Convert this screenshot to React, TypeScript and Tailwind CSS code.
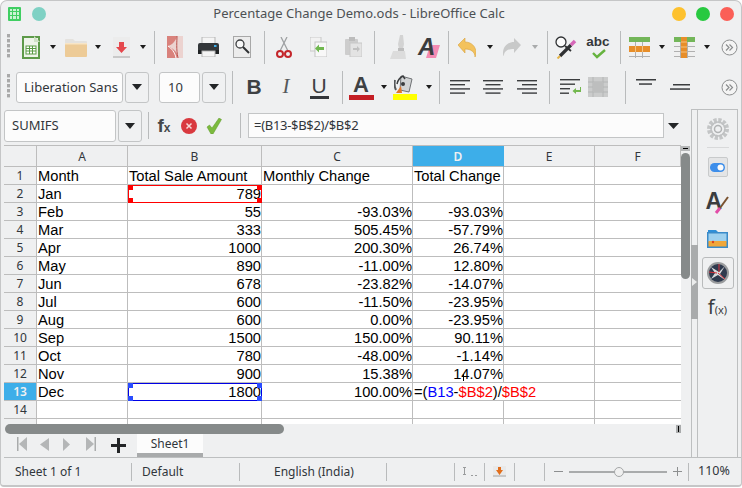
import React from "react";

const Sep = ({ c = "h-[33px]" }: { c?: string }) => (
  <div className="w-[4px] flex justify-center shrink-0"><div className={`w-px bg-[#b9bbbc] ${c}`} /></div>
);
const Slot = ({ c, children }: { c: string; children?: React.ReactNode }) => (
  <div className={`flex items-center justify-center shrink-0 ${c}`}>{children}</div>
);
const Caret = ({ color = "#1c1c1c" }: { color?: string }) => (
  <svg width="6" height="4" viewBox="0 0 6 4" className="shrink-0"><path d="M0 0h6L3 4z" fill={color} /></svg>
);
const Handle = () => (
  <svg width="4" height="26" viewBox="0 0 4 26">
    {[0, 5, 10, 15, 20].map((y) => <rect key={y} x="0" y={y} width="3" height="3.4" fill="#a9a9a9" />)}
  </svg>
);
const More = () => (
  <svg width="17" height="17" viewBox="0 0 17 17" fill="none" stroke="#8b8d8e" className="shrink-0">
    <circle cx="8.500" cy="8.500" r="7.500" fill="#f4f4f4" />
    <path d="M5 5.500l3 3-3 3M8.500 5.500l3 3-3 3" strokeWidth="1.200" />
  </svg>
);
const Lines = ({ align }: { align: "l" | "c" | "r" }) => {
  const short = align === "l" ? 0 : align === "c" ? 2.5 : 5;
  return (
    <svg width="20" height="14" viewBox="0 0 20 14" className="shrink-0">
      <rect x="0" y="0" width="20" height="1.400" fill="#3b3d3f" />
      <rect x={short} y="4" width="15" height="1.400" fill="#3b3d3f" />
      <rect x="0" y="8.200" width="20" height="1.400" fill="#3b3d3f" />
      <rect x={short} y="12.400" width="15" height="1.400" fill="#3b3d3f" />
    </svg>
  );
};
const GridIcon = ({ cols }: { cols?: boolean }) => (
  <svg width="21" height="21" viewBox="0 0 21 21" className="shrink-0">
    <rect x="0" y="0" width="21" height="21" rx="1" fill="#f0f0f0" />
    <rect x="0" y="0" width="21" height="5" fill="#73b659" />
    {[9, 14, 19].map((y) => <rect key={`a${y}`} x="0" y={y} width="21" height="1" fill="#b0b0b0" />)}
    {[6, 13].map((x) => <rect key={`b${x}`} x={x} y="5" width="1" height="16" fill="#b0b0b0" />)}
    {cols ? (
      <>
        <rect x="7" y="0" width="6" height="21" fill="#e78e2a" />
        <path d="M7 5h6M7 10h6M7 15h6" stroke="#f6c27f" />
      </>
    ) : (
      <>
        <rect x="0" y="9" width="21" height="6" fill="#e78e2a" />
        <path d="M6.500 9v6M13.500 9v6" stroke="#f6c27f" />
      </>
    )}
  </svg>
);

const Toolbar1 = () => (
  <div className="h-[42px] flex items-center pl-[6px] shrink-0">
    <div className="w-[13px] shrink-0"><Handle /></div>
    <Slot c="w-[22px]">
      <svg width="18" height="23" viewBox="0 0 18 23">
        <rect width="18" height="23" fill="#5d9a49" /><rect x="2" y="2" width="14" height="19" fill="#eef4ea" />
        <path d="M12 0l6 6h-6z" fill="#cfe1c6" />
        <rect x="4" y="10" width="10" height="8" fill="#fff" stroke="#5a9b45" />
        <path d="M4 12.500h10M4 15h10M7.500 10v8M10.500 10v8" stroke="#5a9b45" />
      </svg>
    </Slot>
    <Slot c="w-[22px]"><Caret /></Slot>
    <Slot c="w-[24px]">
      <svg width="22" height="19" viewBox="0 0 22 19">
        <path d="M0 2a1 1 0 011-1h7l2 2h11a1 1 0 011 1v2H0z" fill="#e4e2de" />
        <rect x="0" y="5" width="22" height="14" rx="1" fill="#edcb97" /><rect y="5" width="22" height="1.500" fill="#f8e5c6" />
      </svg>
    </Slot>
    <Slot c="w-[20px]"><Caret /></Slot>
    <Slot c="w-[26px]">
      <svg width="17" height="21" viewBox="0 0 17 21">
        <rect width="17" height="21" fill="#ececec" /><rect y="19" width="17" height="2" fill="#c9c9c9" />
        <path d="M6 5h5v5h3l-5.500 6L3 10h3z" fill="#e5484d" />
      </svg>
    </Slot>
    <Slot c="w-[18px]"><Caret /></Slot>
    <Sep />
    <Slot c="w-[38px]">
      <svg width="16" height="22" viewBox="0 0 16 22">
        <rect width="16" height="22" fill="#d9827c" /><path d="M10 0h6v22h-6C12 15 4 12 1 10c4-1 8-5 9-10z" fill="#ecd3d0" />
        <path d="M1 10c3 2 7 6 8 12" stroke="#fff" fill="none" /><path d="M10 0c0 5-1 13 1 22" stroke="#b9514c" fill="none" />
      </svg>
    </Slot>
    <Slot c="w-[28px]">
      <svg width="21" height="20" viewBox="0 0 21 20">
        <rect x="4" y="0" width="13" height="7" fill="#f4f4f4" stroke="#b5b5b5" />
        <rect x="0" y="6" width="21" height="10" rx="2" fill="#33373a" />
        <rect x="16" y="8" width="2.500" height="2" fill="#3daee9" />
        <rect x="0" y="13" width="21" height="4" fill="#1f2224" />
        <rect x="4" y="14" width="13" height="6" fill="#f4f4f4" stroke="#b5b5b5" />
      </svg>
    </Slot>
    <Slot c="w-[40px]">
      <svg width="18" height="22" viewBox="0 0 18 22">
        <rect x="0.500" y="0.500" width="17" height="21" fill="#ececec" stroke="#a8a8a8" />
        <circle cx="7" cy="8" r="4" fill="#f8f8f8" stroke="#3d3f41" strokeWidth="1.300" />
        <path d="M10 11l6 6" stroke="#2f3133" strokeWidth="2" />
      </svg>
    </Slot>
    <Sep />
    <Slot c="w-[36px]">
      <svg width="16" height="21" viewBox="0 0 16 21" fill="none">
        <path d="M4 14L11 0M12 14L5 0" stroke="#9ea1a3" strokeWidth="1.300" />
        <circle cx="4" cy="17" r="3" stroke="#c4262b" strokeWidth="2" /><circle cx="12" cy="17" r="3" stroke="#c4262b" strokeWidth="2" />
      </svg>
    </Slot>
    <Slot c="w-[32px]">
      <svg width="17" height="20" viewBox="0 0 17 20">
        <rect x="0" y="0" width="11" height="14" fill="#f2f2f2" stroke="#c8c8c8" /><rect x="5" y="5" width="12" height="15" fill="#f8f8f8" stroke="#c4c4c4" />
        <path d="M14 10H9V7.500L5 11.500l4 4V13h5z" fill="#70b84f" />
      </svg>
    </Slot>
    <Slot c="w-[38px]">
      <svg width="17" height="20" viewBox="0 0 17 20">
        <rect x="0" y="2" width="13" height="16" rx="1" fill="#cdcdcd" /><rect x="4" y="0" width="6" height="4" fill="#bcbcbc" />
        <rect x="5" y="6" width="12" height="14" fill="#e3e3e3" stroke="#c8c8c8" />
        <path d="M8 11h4V9l3 3-3 3v-2H8z" fill="#c0c0c0" />
      </svg>
    </Slot>
    <Sep />
    <Slot c="w-[44px]">
      <svg width="16" height="24" viewBox="0 0 16 24">
        <path d="M10 0h3l1 9-1 5H9l-1-5z" fill="#d3d3d3" /><path d="M8 13h6v3H8z" fill="#bdbdbd" />
        <path d="M3 16h12l1 8H0z" fill="#dcdcdc" />
      </svg>
    </Slot>
    <Slot c="w-[18px]">
      <div className="relative w-[22px] h-[24px] shrink-0 flex items-center">
        <svg width="14" height="13" viewBox="0 0 14 13" className="absolute left-[8px] top-[10px]">
          <path d="M4 0h10l-4 13H0z" fill="#f48bb3" />
        </svg>
        <span className="relative font-['Liberation_Sans',sans-serif] italic font-bold text-[#3a3c3e] text-[24px] leading-[24px]">A</span>
      </div>
    </Slot>
    <div className="w-[8px] shrink-0" />
    <Sep />
    <Slot c="w-[34px]">
      <svg width="18" height="19" viewBox="0 0 18 19">
        <path d="M0 7l7-7v4c6 0 11 4 11 11 0 2-.5 3-1 4 0-5-4-8-10-8v4z" fill="#f3c25d" stroke="#d9a23e" strokeWidth=".6" />
      </svg>
    </Slot>
    <Slot c="w-[12px]"><Caret /></Slot>
    <Slot c="w-[32px]">
      <svg width="18" height="18" viewBox="0 0 18 18">
        <path d="M18 7l-7-7v4C5 4 0 8 0 15c0 2 .5 3 1 3 0-5 4-7 10-7v4z" fill="#c8c9c9" />
      </svg>
    </Slot>
    <Slot c="w-[14px]"><Caret color="#a9abac" /></Slot>
    <div className="w-[3px] shrink-0" />
    <Sep />
    <Slot c="w-[34px]">
      <svg width="22" height="23" viewBox="0 0 22 23" fill="none">
        <circle cx="6" cy="6" r="5" fill="#fbfbfb" stroke="#2f3133" strokeWidth="1.300" />
        <path d="M10 10l6 5" stroke="#2f3133" strokeWidth="1.800" />
        <path d="M5 20L16 9" stroke="#2f3133" strokeWidth="3.200" />
        <path d="M16 9l4-4" stroke="#d667b8" strokeWidth="3.600" />
        <path d="M2.500 22.500L5 20" stroke="#e4b448" strokeWidth="2" />
      </svg>
    </Slot>
    <Slot c="w-[30px]">
      <div className="w-[25px] h-[24px] shrink-0 flex flex-col items-center">
        <span className="font-['Liberation_Sans',sans-serif] font-bold text-[13.5px] leading-[14px] text-[#36383a]">abc</span>
        <svg width="14" height="10" viewBox="0 0 14 10" className="ml-[2px]"><path d="M1 4l4 4 8-7" stroke="#66b33f" strokeWidth="2.400" fill="none" /></svg>
      </div>
    </Slot>
    <div className="w-[5px] shrink-0" />
    <Sep />
    <Slot c="w-[34px]"><GridIcon /></Slot>
    <Slot c="w-[12px]"><Caret /></Slot>
    <Slot c="w-[32px]"><GridIcon cols /></Slot>
    <Slot c="w-[14px]"><Caret /></Slot>
    <div className="w-[4px] shrink-0" />
    <Slot c="w-[23px]"><More /></Slot>
  </div>
);

const Arrow = ({ c }: { c: string }) => (
  <div className={`flex items-center justify-center rounded-[3px] border border-[#c3c5c6] bg-[#f0f1f2] shrink-0 ${c}`}>
    <svg width="10" height="6" viewBox="0 0 10 6"><path d="M0 0h10L5 6z" fill="#232527" /></svg>
  </div>
);

const Toolbar2 = () => (
  <div className="h-[38px] flex items-center pl-[6px] shrink-0 font-['Noto_Sans',sans-serif] text-[13px] text-[#31363b]">
    <div className="w-[9px] shrink-0"><Handle /></div>
    <div className="w-[107px] h-[31px] rounded-[3px] border border-[#c3c5c6] bg-[#fcfcfc] flex items-center pl-[7px] pt-[1px] shrink-0 whitespace-nowrap">Liberation Sans</div>
    <div className="w-[2px] shrink-0" />
    <Arrow c="w-[24px] h-[31px]" />
    <div className="w-[10px] shrink-0" />
    <div className="w-[41px] h-[31px] rounded-[3px] border border-[#c3c5c6] bg-[#fcfcfc] flex items-center pl-[8px] pt-[1px] shrink-0">10</div>
    <div className="w-[2px] shrink-0" />
    <Arrow c="w-[24px] h-[31px]" />
    <div className="w-[4px] shrink-0" />
    <Sep />
    <Slot c="w-[40px]">
      <span className="font-['Liberation_Sans',sans-serif] font-bold text-[#3e4143] text-[21px]">B</span>
    </Slot>
    <Slot c="w-[24px]">
      <span className="font-['Liberation_Serif',serif] italic text-[#55585a] text-[21px]">I</span>
    </Slot>
    <Slot c="w-[42px]">
      <div className="flex flex-col items-center">
        <span className="font-['Liberation_Sans',sans-serif] text-[#3e4143] text-[21px] leading-[20px]">U</span>
        <div className="w-[19px] h-[3px] bg-[#33363a]" />
      </div>
    </Slot>
    <Sep />
    <Slot c="w-[34px]">
      <div className="flex flex-col items-center">
        <span className="font-['Liberation_Sans',sans-serif] font-bold text-[#3e4143] text-[22px] leading-[20px]">A</span>
        <div className="w-[25px] h-[5px] bg-[#c41e24]" />
      </div>
    </Slot>
    <Slot c="w-[12px]"><Caret /></Slot>
    <Slot c="w-[30px]">
      <div className="flex flex-col items-center">
        <svg width="22" height="19" viewBox="0 0 22 19">
          <path d="M7 1l11 3-3 13-9-2z" fill="#d2d4d5" stroke="#6f7275" />
          <path d="M3 9c1-5 4-7 6-8l2 3" stroke="#3a3c3e" strokeWidth="1.500" fill="none" />
          <circle cx="9" cy="9" r="2" fill="#3a3c3e" />
          <path d="M7 11L2 18h6z" fill="#e0762b" />
          <path d="M1 5c-1 4 0 8 1 10" stroke="#55585a" strokeWidth="2" fill="none" />
        </svg>
        <div className="w-[24px] h-[6px] bg-[#ffff00]" />
      </div>
    </Slot>
    <Slot c="w-[17px]"><Caret /></Slot>
    <Sep />
    <Slot c="w-[38px]"><Lines align="l" /></Slot>
    <Slot c="w-[28px]"><Lines align="c" /></Slot>
    <Slot c="w-[40px]"><Lines align="r" /></Slot>
    <Sep />
    <Slot c="w-[38px]">
      <svg width="21" height="16" viewBox="0 0 21 16">
        <rect width="20" height="1.400" fill="#3b3d3f" /><rect y="4.500" width="15" height="1.400" fill="#3b3d3f" />
        <rect y="9" width="10" height="1.400" fill="#3b3d3f" /><rect y="13.500" width="9" height="1.400" fill="#3b3d3f" />
        <path d="M20 8v3h-4v-2l-3.500 3 3.500 3v-2h5V8z" fill="#73b84f" />
      </svg>
    </Slot>
    <Slot c="w-[18px]">
      <svg width="20" height="20" viewBox="0 0 20 20" className="shrink-0">
        <rect width="20" height="20" fill="#cbcccc" /><path d="M0 5h20M0 10h20M0 15h20M5 0v20M15 0v20" stroke="#b4b6b6" />
        <rect x="5" y="5" width="10" height="10" fill="#bdbebe" />
      </svg>
    </Slot>
    <div className="w-[16px] shrink-0" />
    <Sep />
    <Slot c="w-[38px] mt-[-10px]">
      <svg width="20" height="6" viewBox="0 0 20 6"><rect width="20" height="1.500" fill="#3b3d3f" /><rect x="3" y="4.300" width="13" height="1.500" fill="#3b3d3f" /></svg>
    </Slot>
    <Slot c="w-[30px]">
      <svg width="20" height="6" viewBox="0 0 20 6"><rect x="3" width="17" height="1.500" fill="#3b3d3f" /><rect y="4.300" width="20" height="1.500" fill="#3b3d3f" /></svg>
    </Slot>
    <div className="w-[22px] shrink-0" />
    <Slot c="w-[24px]"><More /></Slot>
  </div>
);

const FormulaBar = () => (
  <div className="h-[39px] flex items-center shrink-0 font-['Noto_Sans',sans-serif] text-[#31363b]">
    <div className="w-[112px] h-[32px] rounded-[3px] border border-[#c3c5c6] bg-[#fcfcfc] flex items-center pl-[7px] text-[13px] shrink-0">SUMIFS</div>
    <div className="w-[2px] shrink-0" />
    <Arrow c="w-[24px] h-[32px]" />
    <div className="w-[4px] shrink-0" />
    <Sep c="h-[27px]" />
    <Slot c="w-[28px]">
      <span className="font-['Liberation_Sans',sans-serif] font-bold text-[#45484a] text-[19px] leading-none whitespace-nowrap">f<span className="text-[12px]">x</span></span>
    </Slot>
    <Slot c="w-[22px]">
      <svg width="16" height="16" viewBox="0 0 16 16">
        <circle cx="8" cy="8" r="8" fill="#d9393f" />
        <path d="M5.500 5.500l5 5M10.500 5.500l-5 5" stroke="#f6d7d7" strokeWidth="1.500" />
      </svg>
    </Slot>
    <Slot c="w-[28px]">
      <svg width="16" height="16" viewBox="0 0 16 16"><path d="M1 9l2.500-2L6 10l7-10 2.500 1.500L7 16H5z" fill="#7cba3e" stroke="#5f9a2c" strokeWidth=".5" /></svg>
    </Slot>
    <div className="w-[10px] shrink-0" />
    <Sep c="h-[25px]" />
    <div className="w-[6px] shrink-0" />
    <div className="w-[416px] h-[25px] border border-[#c3c5c6] bg-[#fcfcfc] flex items-center pl-[5px] text-[13px] tracking-[-0.3px] shrink-0 whitespace-nowrap">=(B13-$B$2)/$B$2</div>
    <Slot c="w-[18px]">
      <svg width="11" height="6" viewBox="0 0 11 6"><path d="M0 0h11L5.500 6z" fill="#232527" /></svg>
    </Slot>
  </div>
);

const Hd = ({ c, children, active }: { c?: string; children?: React.ReactNode; active?: boolean }) => (
  <div className={`h-[21px] pt-[1px] flex items-center justify-center border-r border-b border-[#bdbdbd] text-[12px] font-['Noto_Sans',sans-serif] ${active ? "bg-[#3daee9] text-[#eff0f1] font-semibold" : "bg-[#eff0f1] text-[#31363b]"} ${c ?? ""}`}>{children}</div>
);

const data: [string, string, string, string][] = [
  ["Month", "Total Sale Amount", "Monthly Change", "Total Change"],
  ["Jan", "789", "", ""],
  ["Feb", "55", "-93.03%", "-93.03%"],
  ["Mar", "333", "505.45%", "-57.79%"],
  ["Apr", "1000", "200.30%", "26.74%"],
  ["May", "890", "-11.00%", "12.80%"],
  ["Jun", "678", "-23.82%", "-14.07%"],
  ["Jul", "600", "-11.50%", "-23.95%"],
  ["Aug", "600", "0.00%", "-23.95%"],
  ["Sep", "1500", "150.00%", "90.11%"],
  ["Oct", "780", "-48.00%", "-1.14%"],
  ["Nov", "900", "15.38%", "14.07%"],
  ["Dec", "1800", "100.00%", ""],
  ["", "", "", ""],
  ["", "", "", ""],
];

const Cell = ({ right, children, last, c }: { right?: boolean; children?: React.ReactNode; last?: boolean; c?: string }) => (
  <div className={`relative h-[18px] bg-white border-b border-[#bdbdbd] ${last ? "" : "border-r"} pl-[1px] pt-[1px] flex items-center text-[14.7px] text-black font-['Liberation_Sans',sans-serif] whitespace-nowrap ${right ? "justify-end" : ""} ${c ?? ""}`}>{children}</div>
);

const Mark = ({ border, fill }: { border: string; fill: string }) => (
  <div className={`absolute left-0 right-[-1px] top-0 bottom-[-1px] border ${border}`}>
    <div className={`absolute left-[-1px] top-[-1px] w-[5px] h-[5px] ${fill}`} />
    <div className={`absolute right-[-1px] top-[-1px] w-[5px] h-[5px] ${fill}`} />
    <div className={`absolute left-[-1px] bottom-[-1px] w-[5px] h-[5px] ${fill}`} />
    <div className={`absolute right-[-1px] bottom-[-1px] w-[5px] h-[5px] ${fill}`} />
  </div>
);

const Sheet = () => (
  <div className="h-[279px] overflow-hidden grid grid-cols-[33px_91px_134px_151px_91px_91px_86px] content-start border-t border-[#bdbdbd] w-[677px] shrink-0">
    <Hd />
    {["A", "B", "C", "D", "E", "F"].map((h) => <Hd key={h} active={h === "D"} c={h === "D" ? "border-r-[#3daee9]" : ""}>{h}</Hd>)}
    {data.map((r, i) => (
      <React.Fragment key={i}>
        <div className={`h-[18px] pt-[1px] flex items-center justify-center border-r border-b border-[#bdbdbd] text-[12px] font-['Noto_Sans',sans-serif] ${i === 12 ? "bg-[#3daee9] text-[#eff0f1] font-semibold" : "bg-[#eff0f1] text-[#31363b]"}`}>{i < 14 ? i + 1 : ""}</div>
        <Cell>{r[0]}</Cell>
        <Cell right={i > 0}>
          {r[1]}
          {i === 1 && <Mark border="border-[#ff0000]" fill="bg-[#ff0000]" />}
          {i === 12 && <Mark border="border-[#0000e6]" fill="bg-[#2a4dff]" />}
        </Cell>
        <Cell right={i > 0}>{r[2]}</Cell>
        <Cell right={i > 0 && i !== 12} last={i === 12} c={i === 12 ? "z-10 bg-transparent" : ""}>
          {r[3]}
          {i === 11 && <div className="absolute left-[50px] top-[9px] w-px h-[7px] bg-black" />}
          {i === 12 && (
            <span>=(<span className="text-[#0000ff]">B13</span>-<span className="text-[#ff0000]">$B$2</span>)/<span className="text-[#ff0000]">$B$2</span></span>
          )}
        </Cell>
        <Cell />
        <Cell last />
      </React.Fragment>
    ))}
  </div>
);

const Tabs = () => (
  <div className="h-[23px] flex items-start pl-[1px] shrink-0">
    <Slot c="w-[34px] h-[20px]">
      <svg width="10" height="14" viewBox="0 0 10 14"><rect width="1.500" height="14" fill="#a9abac" /><path d="M10 0v14L2 7z" fill="#b4b6b7" /></svg>
    </Slot>
    <Slot c="w-[11px] h-[20px]"><svg width="9" height="13" viewBox="0 0 9 13" className="shrink-0"><path d="M9 0v13L0 6.500z" fill="#b4b6b7" /></svg></Slot>
    <Slot c="w-[32px] h-[20px]"><svg width="7" height="13" viewBox="0 0 7 13"><path d="M0 0v13l7-6.500z" fill="#b4b6b7" /></svg></Slot>
    <Slot c="w-[18px] h-[20px]">
      <svg width="10" height="14" viewBox="0 0 10 14"><path d="M0 0v14l8-7z" fill="#b4b6b7" /><rect x="8.500" width="1.500" height="14" fill="#a9abac" /></svg>
    </Slot>
    <Slot c="w-[37px] h-[20px] mt-[1px]">
      <svg width="15" height="15" viewBox="0 0 15 15"><path d="M6 0h3v6h6v3H9v6H6V9H0V6h6z" fill="#232527" /></svg>
    </Slot>
    <div className="w-[66px] h-[23px] pt-[1px] bg-[#fcfcfc] border-b-4 border-[#a9abac] flex items-center justify-center text-[12px] text-[#31363b] font-['Noto_Sans',sans-serif] shrink-0">Sheet1</div>
  </div>
);

const SB = () => <div className="w-px h-[18px] bg-[#b9bbbc] shrink-0" />;

const Status = () => (
  <div className="h-[28px] flex items-center border-t border-[#bdbfc0] shrink-0 text-[12px] text-[#31363b] font-['Noto_Sans',sans-serif] whitespace-nowrap">
    <div className="w-[127px] pl-[11px] shrink-0">Sheet 1 of 1</div>
    <SB />
    <div className="w-[107px] pl-[10px] shrink-0">Default</div>
    <SB />
    <div className="w-[146px] pl-[34px] shrink-0">English (India)</div>
    <SB />
    <div className="w-[67px] shrink-0" />
    <SB />
    <Slot c="w-[29px]">
      <svg width="14" height="9" viewBox="0 0 14 9" fill="none"><path d="M1.500 0v8M3 0.500H0M3 7.500H0" stroke="#9a9c9d" /><path d="M8 8.500h2M12 8.500h2" stroke="#9a9c9d" /></svg>
    </Slot>
    <SB />
    <Slot c="w-[29px]">
      <svg width="13" height="11" viewBox="0 0 13 11">
        <rect width="13" height="11" fill="#e9e9e9" /><rect y="9" width="13" height="2" fill="#c8c8c8" />
        <path d="M5 1h3v3h2L6.500 9 3 4h2z" fill="#e26f1d" />
      </svg>
    </Slot>
    <SB />
    <div className="w-[29px] shrink-0" />
    <SB />
    <Slot c="w-[24px] pl-[2px]"><div className="w-[9px] h-px bg-[#8d8f90]" /></Slot>
    <div className="relative w-[98px] h-[2px] bg-[#a9abac] shrink-0">
      <div className="absolute left-[45px] top-[-4px] w-[10px] h-[10px] rounded-full bg-[#f0f0f0] border border-[#a5a7a8]" />
    </div>
    <Slot c="w-[21px]">
      <svg width="9" height="9" viewBox="0 0 9 9"><path d="M4.500 0v9M0 4.500h9" stroke="#8d8f90" /></svg>
    </Slot>
    <SB />
    <div className="pl-[9px] text-[12.5px]">110%</div>
  </div>
);

const Side = () => (
  <div className="w-[40px] shrink-0 mt-[3px] border-t border-r border-[#bdbfc0] flex flex-col items-center">
    <Slot c="h-[37px] w-full">
      <svg width="24" height="24" viewBox="0 0 24 24" fill="none">
        <circle cx="12" cy="12" r="8.500" stroke="#c3c5c6" strokeWidth="5" strokeDasharray="3 1.450" />
        <circle cx="12" cy="12" r="7" stroke="#bfc1c2" strokeWidth="1.500" /><circle cx="12" cy="12" r="3.500" stroke="#b1b3b4" strokeWidth="1.500" />
      </svg>
    </Slot>
    <div className="w-[22px] h-px bg-[#d8d9da] mb-[9px] shrink-0" />
    <div className="w-[20px] h-[20px] border border-[#c8cacb] rounded-[2px] bg-[#e4e5e6] flex items-center justify-center mb-[12px] shrink-0">
      <svg width="15" height="9" viewBox="0 0 15 9"><rect width="15" height="9" rx="4.500" fill="#3d8eea" /><circle cx="10.500" cy="4.500" r="3" fill="#fbfbfb" /></svg>
    </div>
    <div className="relative w-[24px] h-[25px] mb-[15px] shrink-0">
      <span className="font-['Liberation_Sans',sans-serif] font-bold text-[#3b3d3f] text-[23px] leading-[24px]">A</span>
      <svg width="24" height="25" viewBox="0 0 24 25" className="absolute left-0 top-0">
        <path d="M14 19L22 8" stroke="#7a5230" strokeWidth="2" /><path d="M10 24l4-5" stroke="#e24da8" strokeWidth="3" />
      </svg>
    </div>
    <svg width="21" height="19" viewBox="0 0 21 19" className="mb-[9px] shrink-0">
      <path d="M1 1h8l2 2H1z" fill="#2f8fd8" /><rect y="3" width="21" height="16" fill="#3a8bc9" />
      <rect x="1.500" y="4.500" width="18" height="8" fill="#9ed0ee" /><rect x="1.500" y="12" width="18" height="5.500" fill="#f0a73a" />
      <circle cx="6" cy="13" r="1.200" fill="#d9431e" />
    </svg>
    <div className="w-[32px] h-[32px] rounded-[3px] border border-[#b9bbbc] flex items-center justify-center mb-[2px] shrink-0">
      <svg width="24" height="24" viewBox="0 0 24 24" fill="none">
        <circle cx="12" cy="12" r="11" fill="#9a9c9e" /><circle cx="12" cy="12" r="9" fill="#2f3a4e" />
        <path d="M5 6l8 5 6-6-5 8 5 6-7-5-7 4 4-6z" fill="#d8dadc" />
        <path d="M13 3v8M3 11l8 1M12 12l7 6" stroke="#d9323a" strokeWidth="1" />
      </svg>
    </div>
    <Slot c="h-[32px] w-full">
      <span className="font-['Noto_Sans',sans-serif] text-[#3b3d3f] text-[20px] leading-none whitespace-nowrap">f<span className="text-[11px]">(x)</span></span>
    </Slot>
  </div>
);

export default function App() {
  return (
    <div className="w-[742px] h-[488px] bg-white overflow-hidden">
      <div className="w-[742px] h-[487px] bg-[#eff0f1] rounded-t-[7px] rounded-b-[4px] border border-b-2 border-[#c5c6c7] flex flex-col overflow-hidden">
        <div className="h-[25px] flex items-center shrink-0">
          <div className="ml-[7px] w-[13px] h-[14px] bg-[#3fce62] rounded-[1px] shrink-0 grid grid-cols-3 gap-px p-[2px]">
            {Array.from({ length: 9 }).map((_, i) => <div key={i} className="bg-[#c9f2d3]" />)}
          </div>
          <div className="ml-[11px] w-[14px] h-[14px] rounded-full bg-[#7fd1c4] shrink-0" />
          <div className="flex-1 text-center text-[13px] text-[#4d5154] font-['Noto_Sans',sans-serif] whitespace-nowrap">Percentage Change Demo.ods - LibreOffice Calc</div>
          <div className="w-[14px] h-[14px] rounded-full bg-[#fdc12e] shrink-0" />
          <div className="ml-[10px] w-[14px] h-[14px] rounded-full bg-[#28c940] shrink-0" />
          <div className="ml-[10px] mr-[7px] w-[14px] h-[14px] rounded-full bg-[#fb5f57] shrink-0" />
        </div>
        <Toolbar1 />
        <Toolbar2 />
        <div className="flex-1 flex min-h-0">
          <div className="flex flex-col w-[690px] shrink-0 pl-[3px]">
            <FormulaBar />
            <div className="flex">
              <Sheet />
              <div className="w-[10px] h-[279px] shrink-0">
                <div className="w-[9px] h-[5px] bg-[#b5b7b8] mt-[1px] flex items-center justify-center"><div className="w-[5px] h-px bg-black" /></div>
                <div className="w-[9px] h-[126px] mt-[2px] rounded-full bg-[#868a8a]" />
              </div>
            </div>
            <div className="h-[10px] flex shrink-0 w-[677px]">
              <div className="ml-[1px] w-[279px] h-[10px] rounded-full bg-[#868a8a]" />
              <div className="flex-1" />
              <div className="w-[5px] h-[8px] mt-[1px] bg-[#a9abac] flex justify-center"><div className="w-px h-[6px] mt-[1px] bg-black" /></div>
            </div>
            <Tabs />
          </div>
          <div className="w-[7px] mt-[3px] relative shrink-0 border-t border-l border-r border-[#bdbfc0]">
            <div className="absolute left-[-1px] right-[-1px] top-[135px] h-[74px] bg-[#a9abac] flex items-center pl-[1px]">
              <svg width="5" height="8" viewBox="0 0 5 8"><path d="M0 0l5 4-5 4z" fill="#eceded" /></svg>
            </div>
          </div>
          <Side />
        </div>
        <div className="pl-[3px] shrink-0 -mt-[1px]"><Status /></div>
      </div>
    </div>
  );
}
